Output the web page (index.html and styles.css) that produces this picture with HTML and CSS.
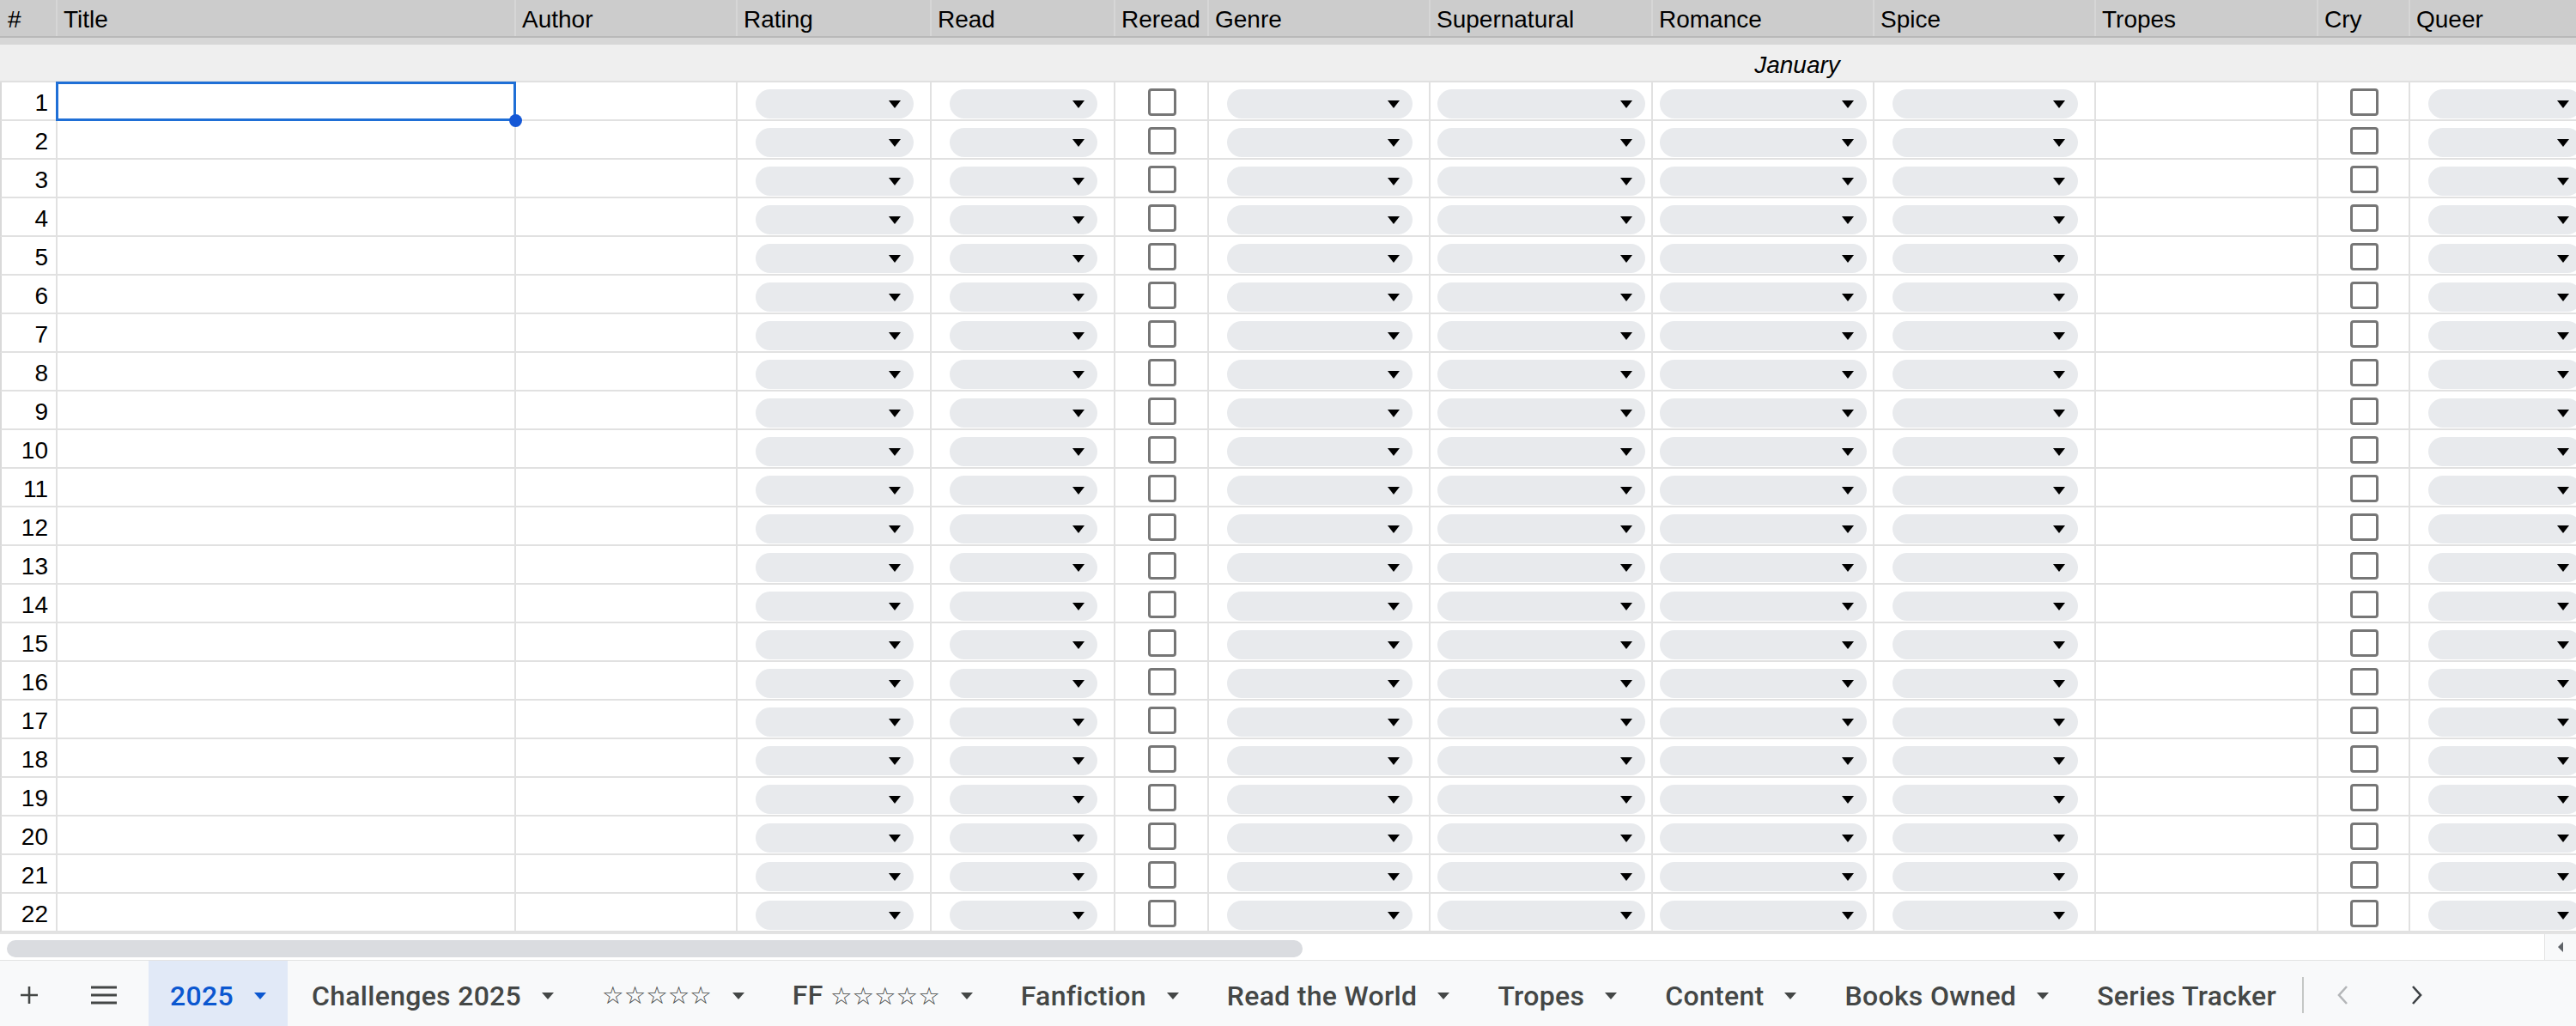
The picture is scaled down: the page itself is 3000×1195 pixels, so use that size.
FILE: index.html
```html
<!DOCTYPE html>
<html lang="en">
<head>
<meta charset="utf-8">
<title>2025 - Reading tracker</title>
<link rel="stylesheet" href="styles.css">
</head>
<body>
<div class="sheet">
  <div class="grid">
    <div class="row hrow">
      <div class="hc">#</div><div class="hc">Title</div><div class="hc">Author</div><div class="hc">Rating</div><div class="hc">Read</div><div class="hc">Reread</div><div class="hc">Genre</div><div class="hc">Supernatural</div><div class="hc">Romance</div><div class="hc">Spice</div><div class="hc">Tropes</div><div class="hc">Cry</div><div class="hc">Queer</div>
    </div>
    <div class="freeze"></div>
    <div class="month"><span>January</span></div>

    <div class="row"><div class="num">1</div><div class="cell sel"></div><div class="cell"></div><div class="cell"><span class="dd"></span></div><div class="cell"><span class="dd"></span></div><div class="cell ck"><span class="box"></span></div><div class="cell"><span class="dd"></span></div><div class="cell"><span class="dd wide"></span></div><div class="cell"><span class="dd wide"></span></div><div class="cell"><span class="dd"></span></div><div class="cell"></div><div class="cell ck"><span class="box"></span></div><div class="cell"><span class="dd"></span></div></div>
    <div class="row"><div class="num">2</div><div class="cell"></div><div class="cell"></div><div class="cell"><span class="dd"></span></div><div class="cell"><span class="dd"></span></div><div class="cell ck"><span class="box"></span></div><div class="cell"><span class="dd"></span></div><div class="cell"><span class="dd wide"></span></div><div class="cell"><span class="dd wide"></span></div><div class="cell"><span class="dd"></span></div><div class="cell"></div><div class="cell ck"><span class="box"></span></div><div class="cell"><span class="dd"></span></div></div>
    <div class="row"><div class="num">3</div><div class="cell"></div><div class="cell"></div><div class="cell"><span class="dd"></span></div><div class="cell"><span class="dd"></span></div><div class="cell ck"><span class="box"></span></div><div class="cell"><span class="dd"></span></div><div class="cell"><span class="dd wide"></span></div><div class="cell"><span class="dd wide"></span></div><div class="cell"><span class="dd"></span></div><div class="cell"></div><div class="cell ck"><span class="box"></span></div><div class="cell"><span class="dd"></span></div></div>
    <div class="row"><div class="num">4</div><div class="cell"></div><div class="cell"></div><div class="cell"><span class="dd"></span></div><div class="cell"><span class="dd"></span></div><div class="cell ck"><span class="box"></span></div><div class="cell"><span class="dd"></span></div><div class="cell"><span class="dd wide"></span></div><div class="cell"><span class="dd wide"></span></div><div class="cell"><span class="dd"></span></div><div class="cell"></div><div class="cell ck"><span class="box"></span></div><div class="cell"><span class="dd"></span></div></div>
    <div class="row"><div class="num">5</div><div class="cell"></div><div class="cell"></div><div class="cell"><span class="dd"></span></div><div class="cell"><span class="dd"></span></div><div class="cell ck"><span class="box"></span></div><div class="cell"><span class="dd"></span></div><div class="cell"><span class="dd wide"></span></div><div class="cell"><span class="dd wide"></span></div><div class="cell"><span class="dd"></span></div><div class="cell"></div><div class="cell ck"><span class="box"></span></div><div class="cell"><span class="dd"></span></div></div>
    <div class="row"><div class="num">6</div><div class="cell"></div><div class="cell"></div><div class="cell"><span class="dd"></span></div><div class="cell"><span class="dd"></span></div><div class="cell ck"><span class="box"></span></div><div class="cell"><span class="dd"></span></div><div class="cell"><span class="dd wide"></span></div><div class="cell"><span class="dd wide"></span></div><div class="cell"><span class="dd"></span></div><div class="cell"></div><div class="cell ck"><span class="box"></span></div><div class="cell"><span class="dd"></span></div></div>
    <div class="row"><div class="num">7</div><div class="cell"></div><div class="cell"></div><div class="cell"><span class="dd"></span></div><div class="cell"><span class="dd"></span></div><div class="cell ck"><span class="box"></span></div><div class="cell"><span class="dd"></span></div><div class="cell"><span class="dd wide"></span></div><div class="cell"><span class="dd wide"></span></div><div class="cell"><span class="dd"></span></div><div class="cell"></div><div class="cell ck"><span class="box"></span></div><div class="cell"><span class="dd"></span></div></div>
    <div class="row"><div class="num">8</div><div class="cell"></div><div class="cell"></div><div class="cell"><span class="dd"></span></div><div class="cell"><span class="dd"></span></div><div class="cell ck"><span class="box"></span></div><div class="cell"><span class="dd"></span></div><div class="cell"><span class="dd wide"></span></div><div class="cell"><span class="dd wide"></span></div><div class="cell"><span class="dd"></span></div><div class="cell"></div><div class="cell ck"><span class="box"></span></div><div class="cell"><span class="dd"></span></div></div>
    <div class="row"><div class="num">9</div><div class="cell"></div><div class="cell"></div><div class="cell"><span class="dd"></span></div><div class="cell"><span class="dd"></span></div><div class="cell ck"><span class="box"></span></div><div class="cell"><span class="dd"></span></div><div class="cell"><span class="dd wide"></span></div><div class="cell"><span class="dd wide"></span></div><div class="cell"><span class="dd"></span></div><div class="cell"></div><div class="cell ck"><span class="box"></span></div><div class="cell"><span class="dd"></span></div></div>
    <div class="row"><div class="num">10</div><div class="cell"></div><div class="cell"></div><div class="cell"><span class="dd"></span></div><div class="cell"><span class="dd"></span></div><div class="cell ck"><span class="box"></span></div><div class="cell"><span class="dd"></span></div><div class="cell"><span class="dd wide"></span></div><div class="cell"><span class="dd wide"></span></div><div class="cell"><span class="dd"></span></div><div class="cell"></div><div class="cell ck"><span class="box"></span></div><div class="cell"><span class="dd"></span></div></div>
    <div class="row"><div class="num">11</div><div class="cell"></div><div class="cell"></div><div class="cell"><span class="dd"></span></div><div class="cell"><span class="dd"></span></div><div class="cell ck"><span class="box"></span></div><div class="cell"><span class="dd"></span></div><div class="cell"><span class="dd wide"></span></div><div class="cell"><span class="dd wide"></span></div><div class="cell"><span class="dd"></span></div><div class="cell"></div><div class="cell ck"><span class="box"></span></div><div class="cell"><span class="dd"></span></div></div>
    <div class="row"><div class="num">12</div><div class="cell"></div><div class="cell"></div><div class="cell"><span class="dd"></span></div><div class="cell"><span class="dd"></span></div><div class="cell ck"><span class="box"></span></div><div class="cell"><span class="dd"></span></div><div class="cell"><span class="dd wide"></span></div><div class="cell"><span class="dd wide"></span></div><div class="cell"><span class="dd"></span></div><div class="cell"></div><div class="cell ck"><span class="box"></span></div><div class="cell"><span class="dd"></span></div></div>
    <div class="row"><div class="num">13</div><div class="cell"></div><div class="cell"></div><div class="cell"><span class="dd"></span></div><div class="cell"><span class="dd"></span></div><div class="cell ck"><span class="box"></span></div><div class="cell"><span class="dd"></span></div><div class="cell"><span class="dd wide"></span></div><div class="cell"><span class="dd wide"></span></div><div class="cell"><span class="dd"></span></div><div class="cell"></div><div class="cell ck"><span class="box"></span></div><div class="cell"><span class="dd"></span></div></div>
    <div class="row"><div class="num">14</div><div class="cell"></div><div class="cell"></div><div class="cell"><span class="dd"></span></div><div class="cell"><span class="dd"></span></div><div class="cell ck"><span class="box"></span></div><div class="cell"><span class="dd"></span></div><div class="cell"><span class="dd wide"></span></div><div class="cell"><span class="dd wide"></span></div><div class="cell"><span class="dd"></span></div><div class="cell"></div><div class="cell ck"><span class="box"></span></div><div class="cell"><span class="dd"></span></div></div>
    <div class="row"><div class="num">15</div><div class="cell"></div><div class="cell"></div><div class="cell"><span class="dd"></span></div><div class="cell"><span class="dd"></span></div><div class="cell ck"><span class="box"></span></div><div class="cell"><span class="dd"></span></div><div class="cell"><span class="dd wide"></span></div><div class="cell"><span class="dd wide"></span></div><div class="cell"><span class="dd"></span></div><div class="cell"></div><div class="cell ck"><span class="box"></span></div><div class="cell"><span class="dd"></span></div></div>
    <div class="row"><div class="num">16</div><div class="cell"></div><div class="cell"></div><div class="cell"><span class="dd"></span></div><div class="cell"><span class="dd"></span></div><div class="cell ck"><span class="box"></span></div><div class="cell"><span class="dd"></span></div><div class="cell"><span class="dd wide"></span></div><div class="cell"><span class="dd wide"></span></div><div class="cell"><span class="dd"></span></div><div class="cell"></div><div class="cell ck"><span class="box"></span></div><div class="cell"><span class="dd"></span></div></div>
    <div class="row"><div class="num">17</div><div class="cell"></div><div class="cell"></div><div class="cell"><span class="dd"></span></div><div class="cell"><span class="dd"></span></div><div class="cell ck"><span class="box"></span></div><div class="cell"><span class="dd"></span></div><div class="cell"><span class="dd wide"></span></div><div class="cell"><span class="dd wide"></span></div><div class="cell"><span class="dd"></span></div><div class="cell"></div><div class="cell ck"><span class="box"></span></div><div class="cell"><span class="dd"></span></div></div>
    <div class="row"><div class="num">18</div><div class="cell"></div><div class="cell"></div><div class="cell"><span class="dd"></span></div><div class="cell"><span class="dd"></span></div><div class="cell ck"><span class="box"></span></div><div class="cell"><span class="dd"></span></div><div class="cell"><span class="dd wide"></span></div><div class="cell"><span class="dd wide"></span></div><div class="cell"><span class="dd"></span></div><div class="cell"></div><div class="cell ck"><span class="box"></span></div><div class="cell"><span class="dd"></span></div></div>
    <div class="row"><div class="num">19</div><div class="cell"></div><div class="cell"></div><div class="cell"><span class="dd"></span></div><div class="cell"><span class="dd"></span></div><div class="cell ck"><span class="box"></span></div><div class="cell"><span class="dd"></span></div><div class="cell"><span class="dd wide"></span></div><div class="cell"><span class="dd wide"></span></div><div class="cell"><span class="dd"></span></div><div class="cell"></div><div class="cell ck"><span class="box"></span></div><div class="cell"><span class="dd"></span></div></div>
    <div class="row"><div class="num">20</div><div class="cell"></div><div class="cell"></div><div class="cell"><span class="dd"></span></div><div class="cell"><span class="dd"></span></div><div class="cell ck"><span class="box"></span></div><div class="cell"><span class="dd"></span></div><div class="cell"><span class="dd wide"></span></div><div class="cell"><span class="dd wide"></span></div><div class="cell"><span class="dd"></span></div><div class="cell"></div><div class="cell ck"><span class="box"></span></div><div class="cell"><span class="dd"></span></div></div>
    <div class="row"><div class="num">21</div><div class="cell"></div><div class="cell"></div><div class="cell"><span class="dd"></span></div><div class="cell"><span class="dd"></span></div><div class="cell ck"><span class="box"></span></div><div class="cell"><span class="dd"></span></div><div class="cell"><span class="dd wide"></span></div><div class="cell"><span class="dd wide"></span></div><div class="cell"><span class="dd"></span></div><div class="cell"></div><div class="cell ck"><span class="box"></span></div><div class="cell"><span class="dd"></span></div></div>
    <div class="row"><div class="num">22</div><div class="cell"></div><div class="cell"></div><div class="cell"><span class="dd"></span></div><div class="cell"><span class="dd"></span></div><div class="cell ck"><span class="box"></span></div><div class="cell"><span class="dd"></span></div><div class="cell"><span class="dd wide"></span></div><div class="cell"><span class="dd wide"></span></div><div class="cell"><span class="dd"></span></div><div class="cell"></div><div class="cell ck"><span class="box"></span></div><div class="cell"><span class="dd"></span></div></div>
  </div>

  <div class="hscroll">
    <div class="thumb"></div>
    <div class="scroll-end"><span class="tri-left"></span></div>
  </div>

  <div class="tabs">
    <div class="iconbtn plus">
      <svg width="24" height="24" viewBox="0 0 24 24"><path d="M12 2v20M2 12h20" stroke="#444746" stroke-width="2.6" fill="none"/></svg>
    </div>
    <div class="iconbtn menu">
      <svg width="30" height="22" viewBox="0 0 30 22"><path d="M0 2h30M0 11h30M0 20h30" stroke="#444746" stroke-width="3" fill="none"/></svg>
    </div>
    <div class="tab active"><span>2025</span><span class="caret"></span></div>
    <div class="tab"><span>Challenges 2025</span><span class="caret"></span></div>
    <div class="tab"><span class="stars">☆☆☆☆☆</span><span class="caret"></span></div>
    <div class="tab"><span>FF <span class="stars">☆☆☆☆☆</span></span><span class="caret"></span></div>
    <div class="tab"><span>Fanfiction</span><span class="caret"></span></div>
    <div class="tab"><span>Read the World</span><span class="caret"></span></div>
    <div class="tab"><span>Tropes</span><span class="caret"></span></div>
    <div class="tab"><span>Content</span><span class="caret"></span></div>
    <div class="tab"><span>Books Owned</span><span class="caret"></span></div>
    <div class="tab last"><span>Series Tracker</span></div>
    <div class="sep"></div>
    <div class="navbtn">
      <svg width="14" height="24" viewBox="0 0 14 24"><path d="M12 2L3 12l9 10" stroke="#b4b6b8" stroke-width="2.6" fill="none"/></svg>
    </div>
    <div class="navbtn">
      <svg width="14" height="24" viewBox="0 0 14 24"><path d="M2 2l9 10-9 10" stroke="#3c4043" stroke-width="2.6" fill="none"/></svg>
    </div>
  </div>
</div>
</body>
</html>
```

FILE: styles.css
```css
* { box-sizing: border-box; }

html, body {
  margin: 0;
  padding: 0;
  background: #ffffff;
}

body {
  width: 3000px;
  height: 1195px;
  overflow: hidden;
  font-family: "Liberation Sans", Arial, sans-serif;
  font-size: 28px;
  line-height: 32px;
  color: #000;
}

.sheet {
  display: flex;
  flex-direction: column;
  height: 1195px;
}

.grid {
  width: 3000px;
  overflow: hidden;
  flex: none;
}

.row {
  display: grid;
  grid-template-columns: 67px 534px 258px 226px 214px 109px 258px 259px 258px 258px 259px 107px 221px;
  width: 3028px;
  height: 45px;
}

/* header */
.hrow {
  height: 44px;
  background: #cccccc;
  border-bottom: 2px solid #b9b9b9;
}

.hc {
  display: flex;
  align-items: flex-end;
  padding: 0 0 3px 7px;
  border-right: 2px solid #d6d6d6;
  white-space: nowrap;
  overflow: hidden;
}
.hc:first-child { padding-left: 9px; }

.freeze {
  height: 8px;
  background: #d7d7d7;
}

.month {
  width: 4186px;
  height: 44px;
  background: #efefef;
  border-bottom: 2px solid #e0e0e0;
  display: flex;
  align-items: flex-end;
  justify-content: center;
  padding-bottom: 2px;
  font-style: italic;
}

/* data rows */
.num {
  display: flex;
  align-items: flex-end;
  justify-content: flex-end;
  padding: 0 9px 3px 0;
  border-left: 2px solid #d9d9d9;
  border-right: 2px solid #e1e1e1;
  border-bottom: 2px solid #e1e1e1;
}

.cell {
  display: flex;
  align-items: flex-start;
  border-right: 2px solid #e1e1e1;
  border-bottom: 2px solid #e1e1e1;
  min-width: 0;
}

.cell.sel { position: relative; }
.cell.sel::before {
  content: "";
  position: absolute;
  top: -1px;
  left: -2px;
  right: -2px;
  bottom: -2px;
  border: 3px solid #1f6fd6;
  z-index: 2;
}
.cell.sel::after {
  content: "";
  position: absolute;
  right: -9px;
  bottom: -9px;
  width: 15px;
  height: 15px;
  border-radius: 50%;
  background: #1558d6;
  z-index: 3;
}

.dd {
  flex: 1;
  height: 34px;
  margin: 8px 19px 0 21px;
  border-radius: 17px;
  background: #e8eaed;
  display: flex;
  align-items: center;
  justify-content: flex-end;
  padding-right: 15px;
}
.dd.wide { margin: 8px 7px 0 8px; }
.dd::after {
  content: "";
  width: 0;
  height: 0;
  border-left: 7px solid transparent;
  border-right: 7px solid transparent;
  border-top: 9px solid #000;
}

.ck { justify-content: center; }
.box {
  width: 33px;
  height: 32px;
  margin-top: 7px;
  margin-left: 2px;
  border: 3px solid #767676;
  border-radius: 4px;
}

/* horizontal scroll */
.hscroll {
  flex: none;
  height: 32px;
  border-top: 2px solid #e3e3e3;
  display: flex;
  align-items: stretch;
}
.thumb {
  width: 1509px;
  height: 20px;
  margin: 7px 0 0 8px;
  border-radius: 10px;
  background: #dadce0;
}
.scroll-end {
  margin-left: auto;
  width: 37px;
  background: #f8f9fa;
  border-left: 1px solid #e3e3e3;
  display: flex;
  align-items: center;
  justify-content: center;
}
.tri-left {
  width: 0;
  height: 0;
  border-top: 6px solid transparent;
  border-bottom: 6px solid transparent;
  border-right: 6px solid #5f6368;
}

/* sheet tabs */
.tabs {
  flex: 1;
  display: flex;
  align-items: stretch;
  background: #f8f9fa;
  border-top: 1px solid #e3e3e3;
  font-family: Roboto, "Noto Sans", sans-serif;
  font-weight: 500;
  font-size: 32px;
  color: #444746;
  white-space: nowrap;
}

.iconbtn {
  display: flex;
  align-items: center;
  justify-content: center;
  padding-top: 4px;
}
.iconbtn.plus { width: 68px; }
.iconbtn.menu { width: 105px; }

.tab {
  display: flex;
  align-items: center;
  gap: 24px;
  padding: 5px 28px 0 28px;
  letter-spacing: 0.3px;
}
.tab.active {
  background: #e1e9f7;
  color: #0b57d0;
  padding-left: 25px;
  padding-right: 25px;
}
.tab.last { padding-right: 30px; }

.stars {
  font-family: "DejaVu Sans", sans-serif;
  font-weight: 400;
  font-size: 28.5px;
  letter-spacing: 0;
}

.caret {
  width: 0;
  height: 0;
  border-left: 7.5px solid transparent;
  border-right: 7.5px solid transparent;
  border-top: 8px solid currentColor;
}

.sep {
  width: 2px;
  align-self: center;
  height: 42px;
  margin-top: 4px;
  background: #c4c7c5;
}

.navbtn {
  width: 84px;
  display: flex;
  align-items: center;
  justify-content: center;
  padding-top: 4px;
}
.sep + .navbtn { width: 90px; }
```
